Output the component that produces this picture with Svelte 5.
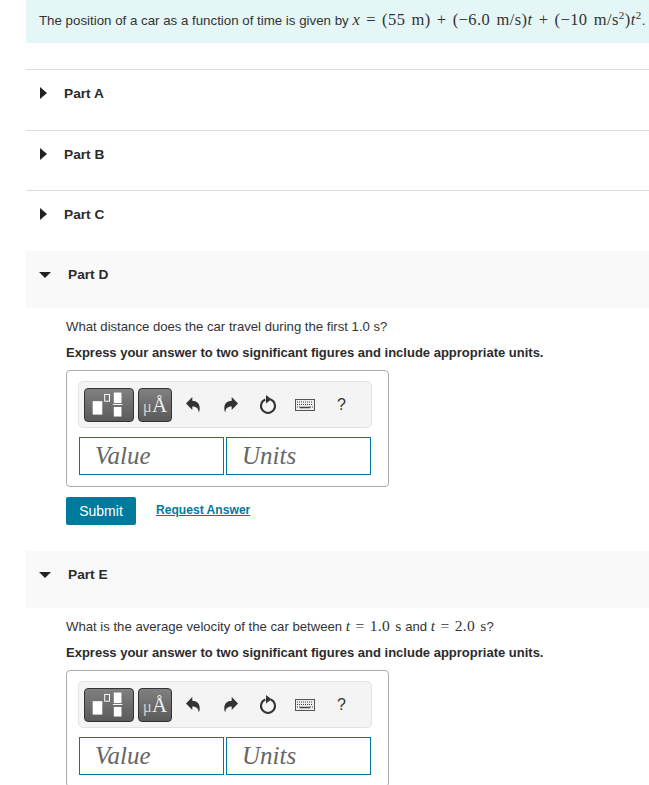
<script>
  const collapsed = ['Part A', 'Part B', 'Part C'];
</script>

{#snippet editor()}
  <div class="frame">
    <div class="toolbar">
      <button class="tool wide" aria-label="Templates">
        <svg width="50" height="34" viewBox="0 0 50 34">
          <rect x="8" y="13" width="10" height="14" fill="#fff" />
          <rect x="20.5" y="6" width="5" height="7" fill="none" stroke="#fff" stroke-width="1" />
          <rect x="30" y="4" width="8" height="11" fill="#fff" />
          <rect x="29" y="16" width="10" height="1" fill="#fff" />
          <rect x="30" y="19" width="8" height="10" fill="#fff" />
        </svg>
      </button>
      <button class="tool unit"><span class="mu">μ</span><span class="ang">Å</span></button>
      <span class="icon first">
        <svg width="14" height="16" viewBox="0 0 14 16"><path d="M0 6.500 6.300 0v3.800c4.400.1 7.600 2.600 7.400 7.900 0 1.300-.4 2.800-1 3.800-.1-3.700-2-6-6.400-6V13z" fill="#333" /></svg>
      </span>
      <span class="icon redo">
        <svg width="14" height="16" viewBox="0 0 14 16"><path d="M14 6.500 7.700 0v3.800C3.300 3.900.1 6.400.3 11.700c0 1.300.4 2.800 1 3.800.1-3.700 2-6 6.400-6V13z" fill="#333" /></svg>
      </span>
      <span class="icon reset">
        <svg width="18" height="20" viewBox="0 0 18 20"><path d="M6.300 4.500a7 7 0 1 0 5.400 0" fill="none" stroke="#333" stroke-width="2" /><path d="M7 0v8.500L12.500 4.200z" fill="#333" /></svg>
      </span>
      <span class="icon keys">
        <svg width="20" height="12" viewBox="0 0 20 12">
          <rect x=".5" y=".5" width="19" height="11" fill="#eee" stroke="#555" />
          <path d="M2 3h16M2 5.500h16" stroke="#444" stroke-width="1.200" stroke-dasharray="1 1" />
          <path d="M2 8h3M15 8h3" stroke="#444" stroke-width="1.200" stroke-dasharray="1 1" />
          <path d="M5 8.500h10" stroke="#444" stroke-width="1.500" />
        </svg>
      </span>
      <span class="help">?</span>
    </div>
    <div class="inputs">
      <div class="field">Value</div>
      <div class="field">Units</div>
    </div>
  </div>
{/snippet}

<main class="page">
  <p class="intro">
    The position of a car as a function of time is given by
    <span class="math"><i>x</i> = (55 m) + (−6.0 m/s)<i>t</i> + (−10 m/s<sup>2</sup>)<i>t</i><sup>2</sup></span>.
  </p>

  <div class="collapsed-list">
    {#each collapsed as part}
      <div class="collapsed">
        <svg class="arrow" width="7" height="12" viewBox="0 0 7 12"><path d="M0 0l7 6-7 6z" fill="#222" /></svg>
        <h2>{part}</h2>
      </div>
    {/each}
  </div>

  <section>
    <header class="open">
      <svg class="down" width="12" height="6" viewBox="0 0 12 6"><path d="M0 0h12L6 6z" fill="#222" /></svg>
      <h2>Part D</h2>
    </header>
    <div class="body">
      <p class="question">What distance does the car travel during the first 1.0 s?</p>
      <p class="express">Express your answer to two significant figures and include appropriate units.</p>
      {@render editor()}
      <div class="actions">
        <button class="submit">Submit</button>
        <a class="request" href="#answer">Request Answer</a>
      </div>
    </div>
  </section>

  <section class="part-e">
    <header class="open">
      <svg class="down" width="12" height="6" viewBox="0 0 12 6"><path d="M0 0h12L6 6z" fill="#222" /></svg>
      <h2>Part E</h2>
    </header>
    <div class="body">
      <p class="question">What is the average velocity of the car between <span class="math small"><i>t</i> = 1.0 s</span> and <span class="math small"><i>t</i> = 2.0 s</span>?</p>
      <p class="express">Express your answer to two significant figures and include appropriate units.</p>
      {@render editor()}
    </div>
  </section>
</main>

<style>
  :global(body) {
    margin: 0;
    background: #fff;
  }

  .page {
    height: 785px;
    overflow: hidden;
    padding-left: 26px;
    box-sizing: border-box;
    font-family: "Liberation Sans", Arial, sans-serif;
    color: #333;
    font-size: 13px;
  }

  p {
    margin: 0;
  }

  .intro {
    height: 43px;
    background: #e4f6f6;
    padding-left: 13px;
    line-height: 41px;
    font-size: 13.300px;
    white-space: nowrap;
    overflow: hidden;
  }

  .math {
    font-family: "Liberation Serif", "Times New Roman", serif;
    font-size: 16.500px;
    line-height: 0;
    letter-spacing: .45px;
    word-spacing: 1.500px;
  }

  .math.small {
    font-size: 15.500px;
    letter-spacing: .3px;
    word-spacing: 1px;
  }

  .math sup {
    font-size: 11px;
    line-height: 0;
  }

  .collapsed-list {
    margin-top: 26px;
  }

  .collapsed {
    height: 61px;
    box-sizing: border-box;
    border-top: 1px solid #ddd;
    display: flex;
    align-items: flex-start;
    padding: 16px 0 0 14px;
    gap: 17px;
  }

  .collapsed:nth-child(2) {
    height: 60px;
  }

  .arrow {
    margin-top: 1px;
  }

  h2 {
    margin: 0;
    font-size: 13.700px;
    line-height: 16px;
    font-weight: 700;
    color: #2b2b2b;
  }

  .open {
    height: 57px;
    background: #f9f9f9;
    display: flex;
    align-items: center;
    gap: 17px;
    padding: 0 0 10px 13px;
    box-sizing: border-box;
  }

  .body {
    padding: 11px 0 0 40px;
  }

  .question {
    font-size: 13.150px;
    line-height: 16px;
    height: 16px;
    white-space: nowrap;
  }

  .express {
    margin-top: 10px;
    font-weight: 700;
    line-height: 16px;
    color: #2b2b2b;
    white-space: nowrap;
  }

  .frame {
    margin-top: 9px;
    width: 323px;
    height: 117px;
    box-sizing: border-box;
    border: 1px solid #aaa;
    border-radius: 4px;
    padding: 10px 16px 0 11px;
  }

  .toolbar {
    height: 47px;
    box-sizing: border-box;
    width: 294px;
    background: #f4f4f4;
    border: 1px solid #e2e2e2;
    border-radius: 5px;
    display: flex;
    align-items: center;
    padding-left: 5px;
    gap: 4px;
  }

  .tool {
    height: 34px;
    padding: 0;
    border: 1px solid #333;
    border-radius: 4px;
    background: linear-gradient(#808080, #5a5a5a);
    display: flex;
    align-items: center;
    justify-content: center;
  }

  .wide {
    width: 50px;
  }

  .unit {
    width: 34px;
    font-family: "Liberation Serif", serif;
    color: #eee;
  }

  .mu {
    font-size: 17px;
    color: #ccc;
    margin-top: 5px;
  }

  .ang {
    font-size: 21px;
    line-height: 1;
    margin-top: 2px;
  }

  .icon {
    display: flex;
    align-items: center;
    justify-content: center;
  }

  .first {
    margin-left: 10px;
  }

  .redo {
    margin-left: 20px;
  }

  .reset {
    margin-left: 17px;
  }

  .keys {
    margin-left: 14px;
  }

  .help {
    margin-left: 18px;
    color: #333;
    font-size: 16px;
  }

  .inputs {
    display: flex;
    gap: 2px;
    margin-top: 9px;
    margin-left: 1px;
  }

  .field {
    width: 145px;
    height: 38px;
    box-sizing: border-box;
    border: 1px solid #007a9c;
    padding-left: 15px;
    font-family: "Liberation Serif", serif;
    font-style: italic;
    font-size: 25px;
    line-height: 36px;
    color: #666;
  }

  .actions {
    display: flex;
    align-items: flex-start;
    margin-top: 10px;
    gap: 20px;
  }

  .submit {
    width: 70px;
    height: 28px;
    padding: 0;
    border: none;
    border-radius: 2px;
    background: #007a9c;
    color: #fff;
    font-family: "Liberation Sans", Arial, sans-serif;
    font-size: 14px;
  }

  .request {
    color: #007a9c;
    font-weight: 700;
    font-size: 12.100px;
    line-height: 26px;
  }

  .part-e {
    margin-top: 26px;
  }
</style>
